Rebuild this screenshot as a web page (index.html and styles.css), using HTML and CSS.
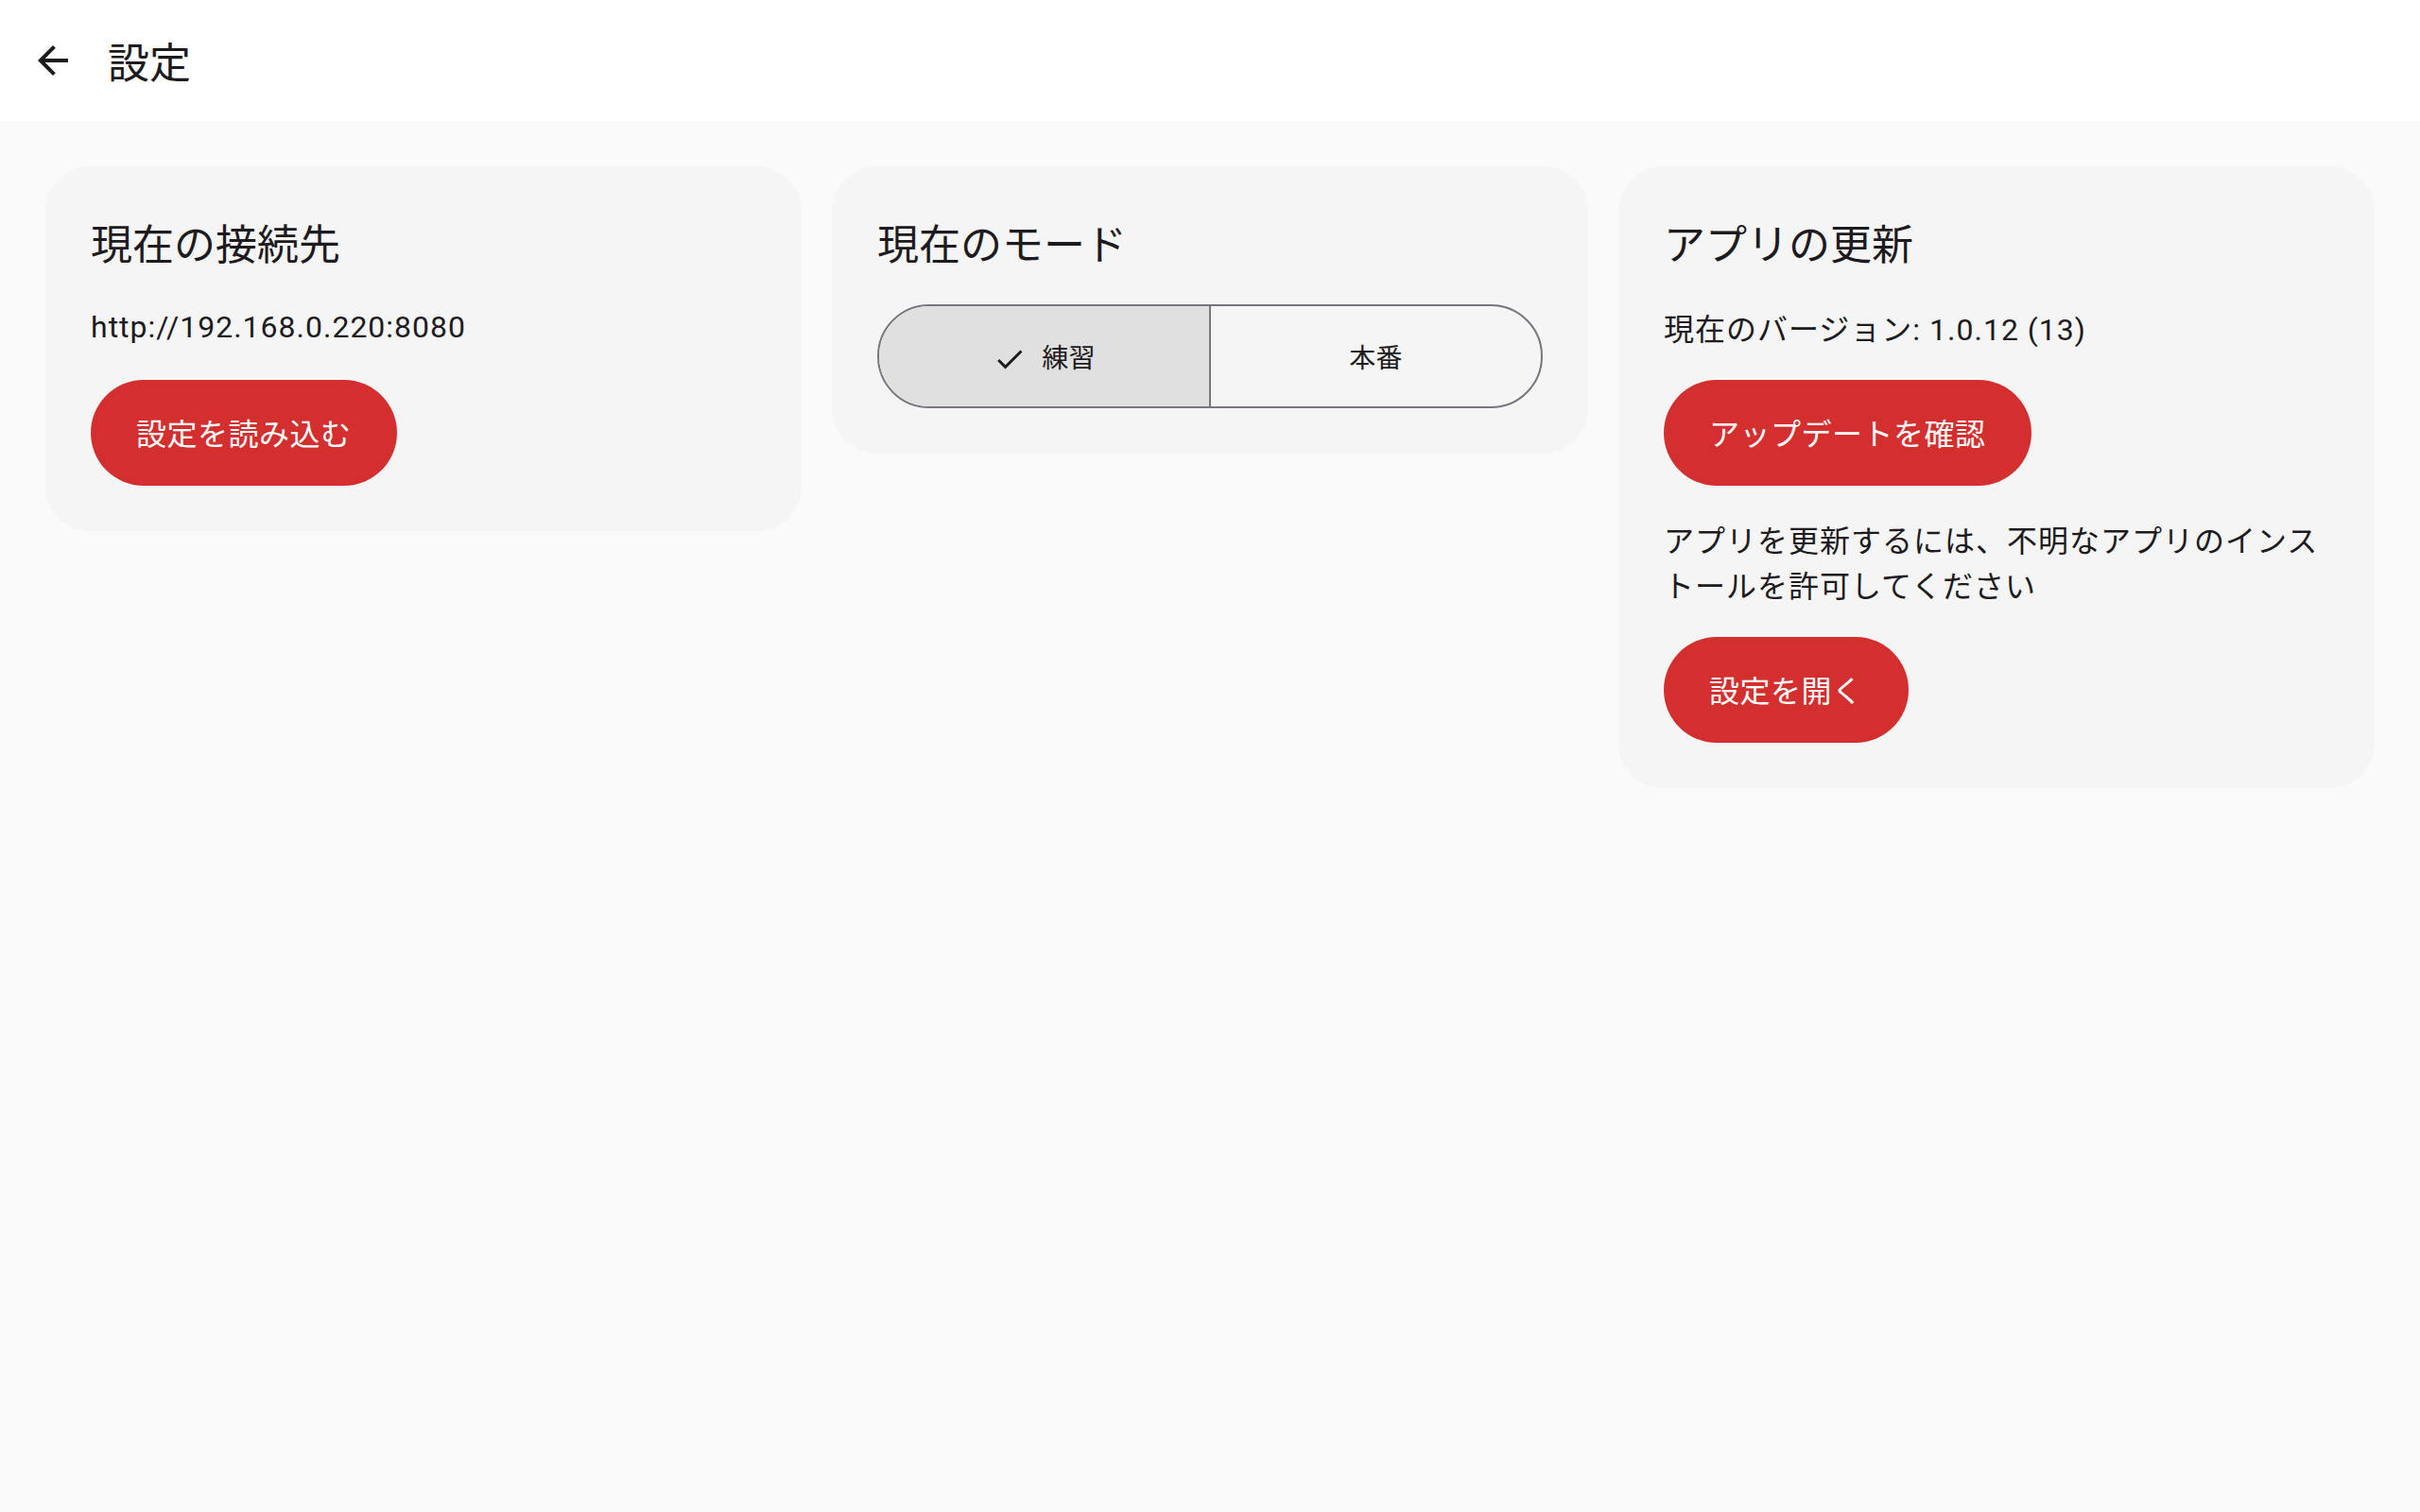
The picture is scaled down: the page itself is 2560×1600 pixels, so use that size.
FILE: index.html
```html
<!DOCTYPE html>
<html lang="ja">
<head>
<meta charset="utf-8">
<title>設定</title>
<link rel="stylesheet" href="styles.css">
</head>
<body>
<header class="app-bar">
  <button class="nav-btn" aria-label="戻る">
    <svg class="nav-icon" viewBox="0 0 24 24"><path d="M20 11H7.83l5.59-5.59L12 4l-8 8 8 8 1.41-1.41L7.83 13H20v-2z"/></svg>
  </button>
  <h1 class="app-title">設定</h1>
</header>
<main class="content">
  <section class="card">
    <h2 class="card-title">現在の接続先</h2>
    <p class="body-text">http://192.168.0.220:8080</p>
    <button class="filled-btn">設定を読み込む</button>
  </section>
  <section class="card">
    <h2 class="card-title">現在のモード</h2>
    <div class="segmented">
      <button class="segment segment-selected">
        <svg class="check-icon" viewBox="0 0 24 24"><path d="M9 16.17L4.83 12l-1.42 1.41L9 19 21 7l-1.41-1.41z"/></svg>
        <span>練習</span>
      </button>
      <button class="segment"><span>本番</span></button>
    </div>
  </section>
  <section class="card">
    <h2 class="card-title">アプリの更新</h2>
    <p class="body-text body-text-cjk">現在のバージョン: 1.0.12 (13)</p>
    <button class="filled-btn">アップデートを確認</button>
    <p class="body-text body-text-cjk">アプリを更新するには、不明なアプリのインストールを許可してください</p>
    <button class="filled-btn">設定を開く</button>
  </section>
</main>
</body>
</html>
```
FILE: styles.css
```css
* {
  box-sizing: border-box;
}

html, body {
  margin: 0;
  padding: 0;
}

body {
  background: #fafafa;
  color: #1d1b20;
  font-family: Roboto, "Noto Sans CJK JP", sans-serif;
  min-height: 1600px;
}

.app-bar {
  height: 128px;
  background: #ffffff;
  display: flex;
  align-items: center;
  padding-left: 32px;
}

.nav-btn {
  width: 48px;
  height: 48px;
  padding: 0;
  margin: 0;
  border: none;
  background: transparent;
  display: flex;
  align-items: center;
  justify-content: center;
}

.nav-icon {
  width: 48px;
  height: 48px;
  fill: #1d1b20;
}

.app-title {
  margin: 0 0 0 34px;
  font-family: "Noto Sans CJK JP", Roboto, sans-serif;
  font-weight: 400;
  font-size: 44px;
  line-height: 64px;
  color: #1d1b20;
}

.content {
  display: grid;
  grid-template-columns: repeat(3, 1fr);
  gap: 32px;
  padding: 48px;
  align-items: start;
}

.card {
  background: #f5f5f5;
  border-radius: 48px;
  padding: 48px;
  display: flex;
  flex-direction: column;
  align-items: flex-start;
}

.card-title {
  margin: 0 0 34px 0;
  font-family: "Noto Sans CJK JP", Roboto, sans-serif;
  font-weight: 400;
  font-size: 44px;
  line-height: 64px;
  color: #1d1b20;
}

.body-text {
  margin: 0 0 32px 0;
  font-size: 32px;
  line-height: 48px;
  letter-spacing: 1px;
  color: #1d1b20;
}

.body-text-cjk {
  padding-top: 3px;
  margin-bottom: 29px;
}

.filled-btn {
  height: 112px;
  padding: 4px 48px 0 48px;
  border: none;
  border-radius: 56px;
  background: #d32f2f;
  color: #ffffff;
  font-family: Roboto, "Noto Sans CJK JP", sans-serif;
  font-size: 32px;
  line-height: 48px;
  letter-spacing: 0.5px;
  display: inline-flex;
  align-items: center;
  justify-content: center;
  margin: 0 0 32px 0;
}

.card > .filled-btn:last-child {
  margin-bottom: 0;
}

.segmented {
  width: 100%;
  height: 110px;
  display: flex;
  border: 2px solid #79747e;
  border-radius: 55px;
  overflow: hidden;
}

.segment {
  flex: 1;
  border: none;
  margin: 0;
  padding: 6px 0 0 0;
  background: transparent;
  display: flex;
  align-items: center;
  justify-content: center;
  gap: 16px;
  font-family: Roboto, "Noto Sans CJK JP", sans-serif;
  font-size: 28px;
  line-height: 40px;
  letter-spacing: 0.2px;
  color: #1d1b20;
}

.segment + .segment {
  border-left: 2px solid #79747e;
}

.segment-selected {
  background: #e0e0e0;
}

.check-icon {
  width: 36px;
  height: 36px;
  fill: #1d1b20;
}
```
